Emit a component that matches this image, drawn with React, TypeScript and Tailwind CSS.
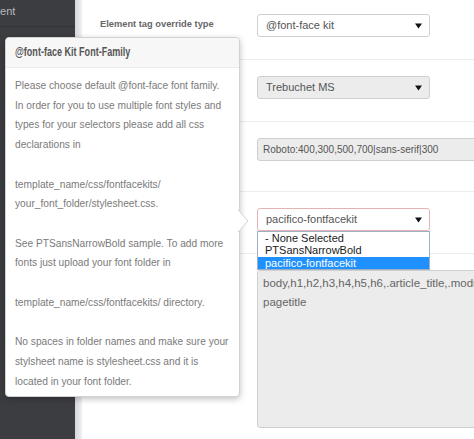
import React from 'react';

const lines = [
  'Please choose default @font-face font family.',
  'In order for you to use multiple font styles and',
  'types for your selectors please add all css',
  'declarations in',
  '',
  'template_name/css/fontfacekits/',
  'your_font_folder/stylesheet.css.',
  '',
  'See PTSansNarrowBold sample. To add more',
  'fonts just upload your font folder in',
  '',
  'template_name/css/fontfacekits/ directory.',
  '',
  'No spaces in folder names and make sure your',
  'stylsheet name is stylesheet.css and it is',
  'located in your font folder.',
];

function Caret() {
  return (
    <svg width="7" height="6" viewBox="0 0 7 6" className="flex-shrink-0">
      <path d="M0 0.5 L7 0.5 L3.5 5.5 Z" fill="#111" />
    </svg>
  );
}

function Select({ value, className = '' }: { value: string; className?: string }) {
  return (
    <div
      className={`w-[173px] h-[23px] rounded-[3px] border flex items-center justify-between pl-[8px] pr-[7px] text-[11px] text-[#555] ${className}`}
    >
      <span>{value}</span>
      <Caret />
    </div>
  );
}

export default function App() {
  return (
    <div className="relative w-[474px] h-[439px] overflow-hidden bg-white flex font-['Liberation_Sans',Arial,sans-serif]">
      {/* sidebar */}
      <div className="w-[75px] flex-shrink-0 bg-[#3c3d41] flex flex-col">
        <div className="h-[27px] border-b border-[#333438] flex items-start pt-[3px] overflow-hidden">
          <span className="-ml-[25px] text-[11px] text-[#b9b9bd]">Element</span>
        </div>
      </div>
      <div className="w-[7px] flex-shrink-0 bg-gradient-to-r from-[#d6d6db] to-[#f1f1f3]" />

      {/* main form */}
      <div className="flex-1 flex flex-col overflow-hidden">
        <div className="h-[60px] flex-shrink-0 border-b border-[#ececec] flex items-start pt-[14px]">
          <div className="w-[175px] pl-[18px] pt-[4px] text-[9.3px] font-bold text-[#666]">
            Element tag override type
          </div>
          <Select value="@font-face kit" className="bg-white border-[#cfcfcf]" />
        </div>
        <div className="h-[62px] flex-shrink-0 border-b border-[#ececec] flex items-start pt-[16px]">
          <div className="w-[175px]" />
          <Select value="Trebuchet MS" className="bg-[#ececec] border-[#cfcfcf]" />
        </div>
        <div className="h-[70px] flex-shrink-0 border-b border-[#ececec] flex items-start pt-[16px]">
          <div className="w-[175px] flex-shrink-0" />
          <div className="w-[240px] flex-shrink-0 h-[23px] rounded-[3px] border border-[#cfcfcf] bg-[#ececec] flex items-center pl-[5px] text-[10px] text-[#555] whitespace-nowrap">
            Roboto:400,300,500,700|sans-serif|300
          </div>
        </div>
        <div className="h-[62px] flex-shrink-0 border-b border-[#ececec] flex items-start pt-[16px]">
          <div className="w-[175px] flex-shrink-0" />
          <div className="relative">
            <Select value="pacifico-fontfacekit" className="bg-white border-[#e3b3b3]" />
            <div className="absolute left-0 top-[23px] z-10 w-[173px] h-[39px] bg-white border border-[#9fb0c4] flex flex-col text-[11px] leading-[12.4px] text-[#222]">
              <div className="pl-[7px]">- None Selected</div>
              <div className="pl-[7px]">PTSansNarrowBold</div>
              <div className="pl-[7px] bg-[#1e90ff] text-white">pacifico-fontfacekit</div>
            </div>
          </div>
        </div>
        <div className="flex items-start pt-[16px]">
          <div className="w-[175px] flex-shrink-0" />
          <div className="w-[240px] flex-shrink-0 h-[158px] rounded-[3px] border border-[#cfcfcf] bg-[#ececec] pl-[5px] pt-[3px] text-[11.5px] leading-[19px] text-[#666] whitespace-nowrap">
            <div>body,h1,h2,h3,h4,h5,h6,.article_title,.module_title</div>
            <div>pagetitle</div>
          </div>
        </div>
      </div>

      {/* tooltip */}
      <div className="absolute left-[5px] top-[37px] w-[235px] h-[360px] bg-white rounded-[4px] border border-[#d2d2d2] shadow-[0_2px_6px_rgba(0,0,0,0.25)] z-20">
        <div className="h-[30px] bg-[#f7f7f7] border-b border-[#ebebeb] rounded-t-[4px] flex items-center px-[9px]">
          <span className="inline-block origin-left scale-x-[0.67] whitespace-nowrap text-[13.5px] font-bold text-[#555]">
            @font-face Kit Font-Family
          </span>
        </div>
        <div className="px-[9px] pt-[8px] text-[10.2px] leading-[19.73px] text-[#7a7a7a] whitespace-nowrap">
          {lines.map((l, i) => (
            <div key={i} className="h-[19.73px]">
              {l}
            </div>
          ))}
        </div>
        <svg
          width="11"
          height="22"
          viewBox="0 0 11 22"
          className="absolute right-[-10px] top-[172px]"
        >
          <path d="M0 0 L10 11 L0 22" fill="white" stroke="#d2d2d2" strokeWidth="1" />
          <rect x="0" y="1" width="1.2" height="20" fill="white" />
        </svg>
      </div>
    </div>
  );
}
